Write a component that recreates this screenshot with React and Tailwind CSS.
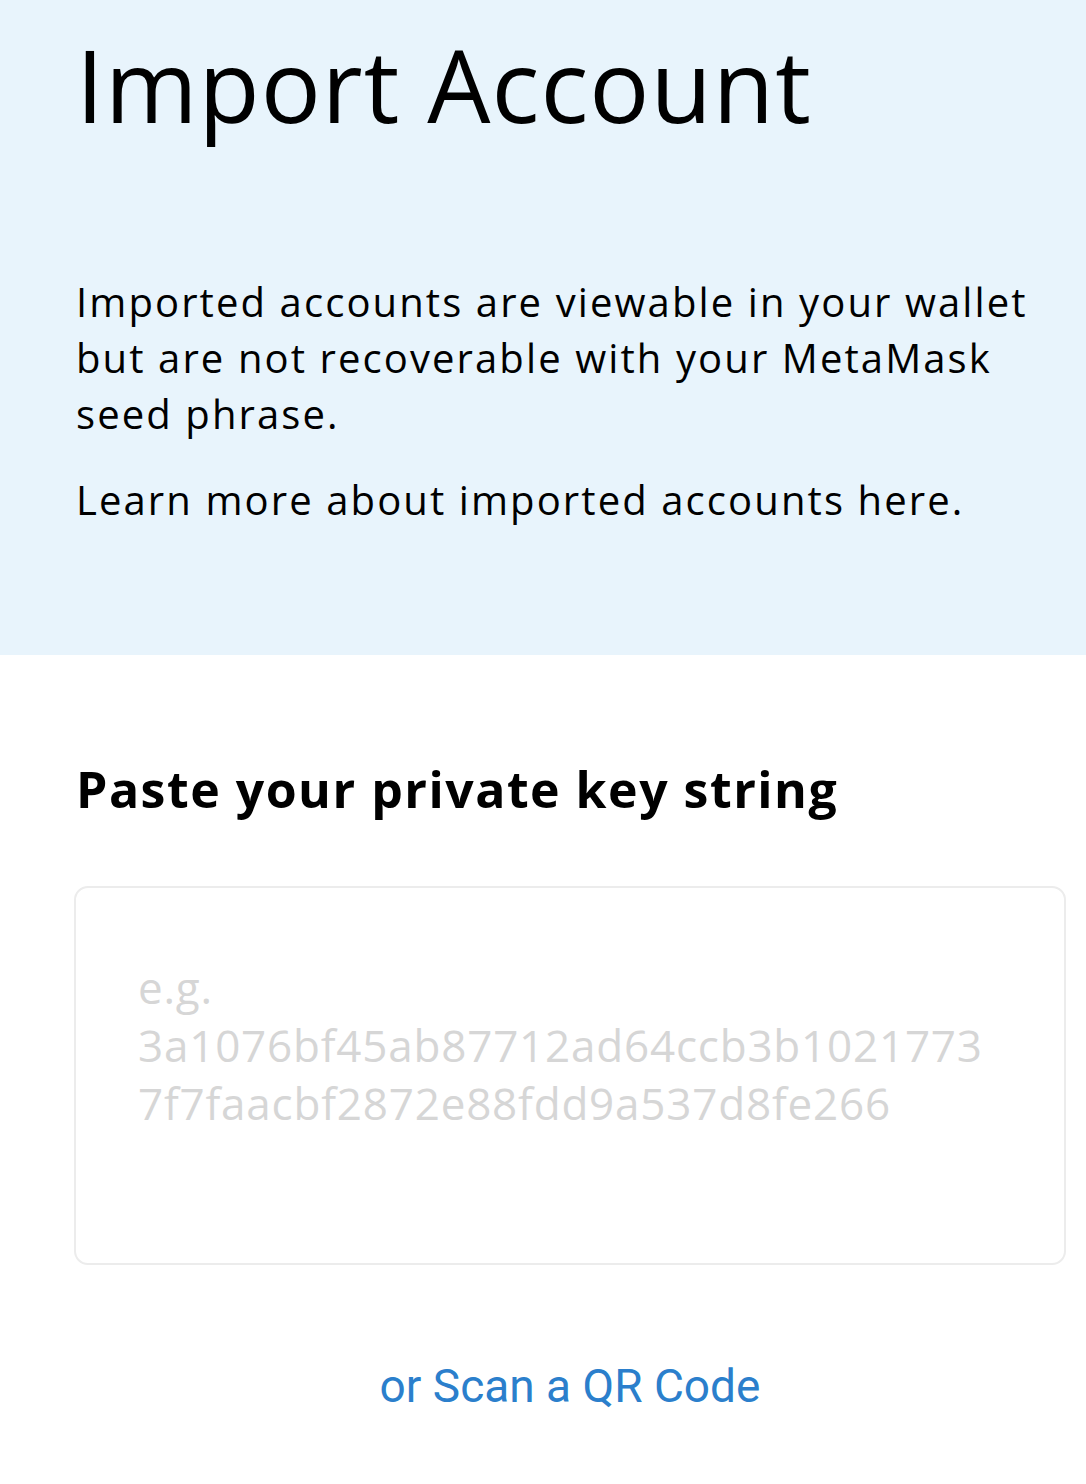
import React from "react";

const PLACEHOLDER = "e.g.\n3a1076bf45ab87712ad64ccb3b1021773\n7f7faacbf2872e88fdd9a537d8fe266";

export default function App() {
  return (
    <div className="w-[1086px] min-h-[1484px] bg-white font-['Open_Sans',sans-serif] text-black">
      {/* Header / description */}
      <div className="h-[655px] bg-[#e8f4fc] pl-[76px] pr-[20px] pt-[24px]">
        <h1 className="text-[100px] leading-[120px] font-normal tracking-[1px]">Import Account</h1>
        <p className="mt-[130px] w-[990px] text-[40px] leading-[56px] tracking-[2.1px]">
          Imported accounts are viewable in your wallet but are not recoverable with your MetaMask seed phrase.
        </p>
        <p className="mt-[30px] text-[40px] leading-[56px] tracking-[2.1px]">
          Learn more about imported accounts here.
        </p>
      </div>

      {/* Private key input */}
      <div className="pl-[74px] pr-[20px] pt-[100px]">
        <h2 className="pl-[2px] text-[50px] leading-[68px] font-bold tracking-[1.5px]">Paste your private key string</h2>
        <textarea
          className="mt-[63px] block w-[992px] h-[379px] resize-none rounded-[14px] border-2 border-[#ececec] bg-white pl-[62px] pr-[30px] pt-[70px] text-[44px] leading-[58px] tracking-[0.8px] outline-none placeholder:text-[#d6d6d6] font-['Open_Sans',sans-serif]"
          placeholder={PLACEHOLDER}
        />
        <div className="mt-[94px] text-center">
          <span className="text-[46px] leading-[54px] text-[#2b7fcc] font-['Roboto',sans-serif]">or Scan a QR Code</span>
        </div>
      </div>
    </div>
  );
}
